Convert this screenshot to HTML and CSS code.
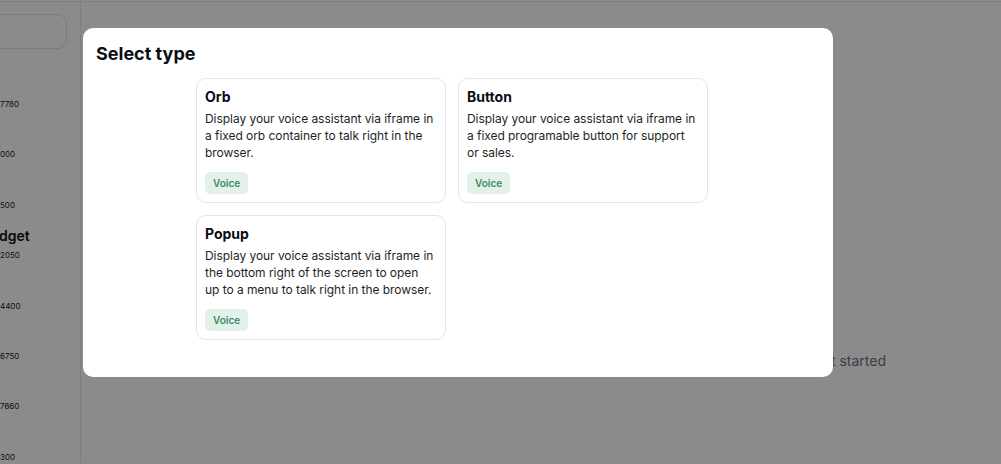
FILE: index.html
```html
<!DOCTYPE html>
<html>
<head>
    <title>Widgets</title>
    <link rel="stylesheet" href="styles.css">
</head>
<body>
    <div class="topline"></div>
    <div class="app">
        <aside class="side">
            <div class="search"></div>
            <div class="rows">
                <div class="amt">7780</div>
                <div class="amt">000</div>
                <div class="amt">500</div>
                <div class="group">dget</div>
                <div class="amt">2050</div>
                <div class="amt">4400</div>
                <div class="amt">6750</div>
                <div class="amt">7660</div>
                <div class="amt">300</div>
            </div>
        </aside>
        <main class="main">
            <p class="empty">Not started</p>
        </main>
    </div>

    <div class="overlay"></div>

    <div class="modal">
        <h2>Select type</h2>
        <div class="types">
            <div class="type">
                <h3>Orb</h3>
                <p>Display your voice assistant via iframe in a fixed orb container to talk right in the browser.</p>
                <span class="tag">Voice</span>
            </div>
            <div class="type">
                <h3>Button</h3>
                <p>Display your voice assistant via iframe in a fixed programable button for support or sales.</p>
                <span class="tag">Voice</span>
            </div>
            <div class="type">
                <h3>Popup</h3>
                <p>Display your voice assistant via iframe in the bottom right of the screen to open up to a menu to talk right in the browser.</p>
                <span class="tag">Voice</span>
            </div>
        </div>
    </div>
</body>
</html>
```

FILE: styles.css
```css
* { box-sizing: border-box; }
body { margin: 0; font-family: Inter, "Noto Sans", sans-serif; background: #fff; color: #111; width: 1001px; height: 464px; overflow: hidden; }
.topline { height: 2px; border-bottom: 1px solid #ececec; }
.app { display: flex; height: 461px; }
.side { width: 81px; border-right: 1px solid #e6e8ee; padding-top: 12px; overflow: hidden; }
.search { width: 80px; margin-left: -13px; height: 35px; border: 1px solid #dfe1e6; border-radius: 10px; }
.rows { padding-top: 50px; }
.amt { font-size: 8px; color: #222; height: 50.4px; line-height: 10px; }
.group { font-size: 14px; font-weight: 600; color: #111; margin-top: -23px; height: 23px; line-height: 18px; margin-left: -1px; }
.main { flex: 1; }
.empty { margin: 0; padding: 350px 0 0 731px; font-size: 14px; color: #6b7280; }
.overlay { position: fixed; inset: 0; background: rgba(0,0,0,0.455); }
.modal { position: fixed; left: 83px; top: 28px; width: 750px; height: 349px; background: #fff; border-radius: 10px; padding: 14px 13px; }
.modal h2 { margin: 0 0 12px; font-size: 18px; font-weight: 700; color: #0b0d14; line-height: 24px; }
.types { display: grid; grid-template-columns: 250px 250px; gap: 12px 12px; padding-left: 100px; }
.type { border: 1px solid #e1e3ee; border-radius: 10px; padding: 8px 9.5px 8px 8px; height: 125px; }
.type h3 { margin: 0; font-size: 14px; font-weight: 700; line-height: 20px; color: #0b0d14; }
.type p { margin: 3px 0 10px; font-size: 12px; line-height: 17px; color: #1d1f26; letter-spacing: -0.05px; }
.tag { display: inline-block; background: #e2f1e9; color: #3c8a62; font-size: 10px; font-weight: 600; padding: 0 8px; line-height: 22px; border-radius: 5px; }
```
